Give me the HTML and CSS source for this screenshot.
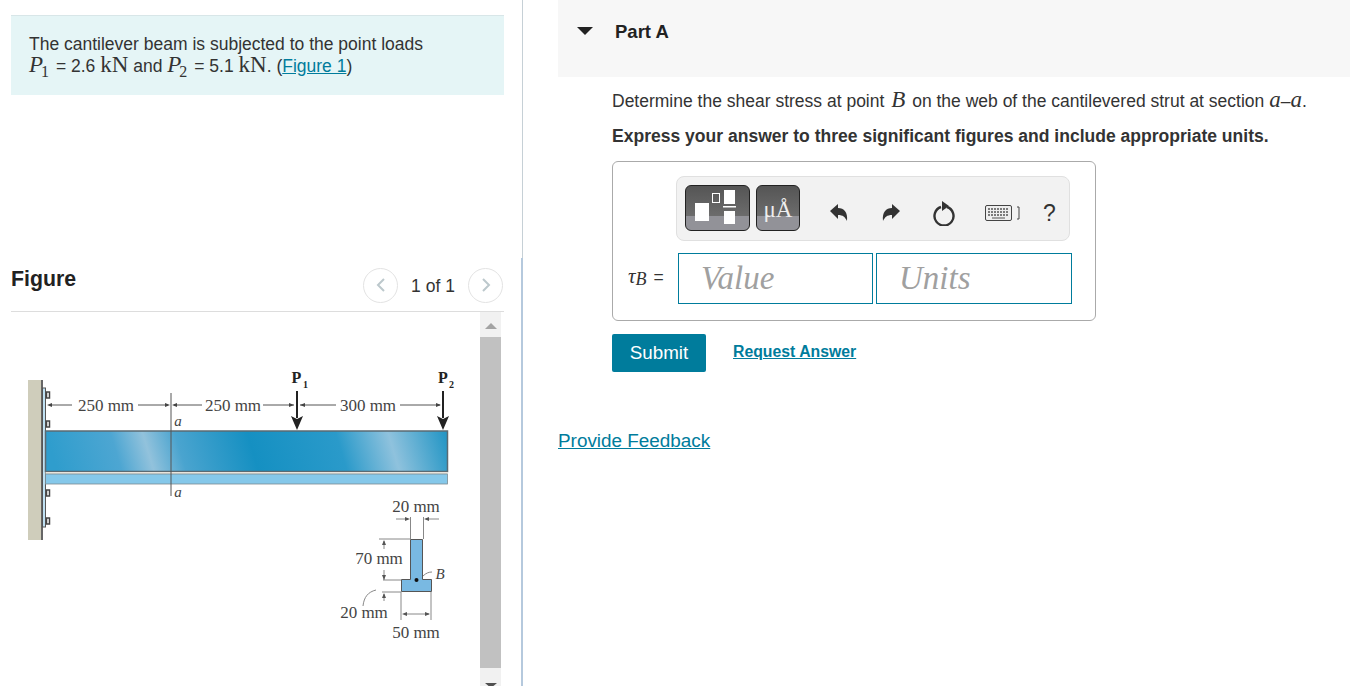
FILE: index.html
```html
<!DOCTYPE html>
<html lang="en">
<head>
<meta charset="utf-8">
<title>Part A</title>
<link rel="stylesheet" href="styles.css">
</head>
<body>
<div class="page">
  <aside class="left">
    <div class="intro">
      <p>The cantilever beam is subjected to the point loads<br>
      <span class="m">P</span><sub class="ms">1</sub> <span class="eq">= 2.6</span> <span class="r">kN</span> and <span class="m">P</span><sub class="ms">2</sub> <span class="eq">= 5.1</span> <span class="r">kN</span>. (<a href="#">Figure 1</a>)</p>
    </div>
    <div class="fig-head">
      <h2>Figure</h2>
      <div class="pager">
        <span class="circle"><svg width="10" height="16" viewBox="0 0 10 16"><path d="M8 2 2 8l6 6" fill="none" stroke="#bcc8cc" stroke-width="2"/></svg></span>
        <span class="count">1 of 1</span>
        <span class="circle"><svg width="10" height="16" viewBox="0 0 10 16"><path d="m2 2 6 6-6 6" fill="none" stroke="#bcc8cc" stroke-width="2"/></svg></span>
      </div>
    </div>
    <div class="fig-view">
      <div class="fig-canvas">
        <svg class="diagram" width="469" height="374" viewBox="0 312 469 374">
          <defs>
            <linearGradient id="beam" x1="0" y1="0" x2="1" y2="-.03">
              <stop offset="0" stop-color="#2f9dcd"/>
              <stop offset=".16" stop-color="#4da6d2"/>
              <stop offset=".24" stop-color="#92c2dc"/>
              <stop offset=".32" stop-color="#4aa4cf"/>
              <stop offset=".5" stop-color="#1590c2"/>
              <stop offset=".72" stop-color="#2a9aca"/>
              <stop offset=".85" stop-color="#8fc2dd"/>
              <stop offset="1" stop-color="#1f94c4"/>
            </linearGradient>
          </defs>
          <rect x="28" y="380" width="13" height="160" fill="#cfcdbb"/>
          <rect x="41" y="380" width="2" height="160" fill="#666"/>
          <rect x="42.500" y="388" width="3" height="139" fill="#bfe0f2" stroke="#555" stroke-width="1"/>
          <g fill="#fff" stroke="#444" stroke-width="1.500">
            <rect x="46.500" y="392" width="3" height="6"/>
            <rect x="46.500" y="421" width="3" height="6"/>
            <rect x="46.500" y="490" width="3" height="6"/>
            <rect x="46.500" y="518" width="3" height="6"/>
          </g>
          <rect x="45.500" y="431" width="402" height="40.500" fill="url(#beam)" stroke="#5b6a72" stroke-width="1.500"/>
          <rect x="45.500" y="472" width="402" height="2" fill="#e8e4dc"/>
          <rect x="45.500" y="474" width="402" height="10" fill="#85c8ea" stroke="#7b8a92" stroke-width=".8"/>
          <g stroke="#555" stroke-width="1" fill="none">
            <path d="M171 393v103"/>
            <path d="M50 405h22M138 405h30M174 405h28M263 405h31M300 405h36M400 405h40"/>
          </g>
          <g fill="#444">
            <path d="m47 405 5-2v4z"/><path d="m170 405-5-2v4z"/><path d="m172 405 5-2v4z"/>
            <path d="m294 405-5-2v4z"/><path d="m300 405 5-2v4z"/><path d="m441 405-5-2v4z"/>
          </g>
          <g stroke="#222" stroke-width="2" fill="#222">
            <path d="M297 391v27M443 391v27"/>
            <path d="m291 416 6 14 6-14-6 3zM437 416l6 14 6-14-6 3z" stroke="none"/>
          </g>
          <g class="dim">
            <text x="106" y="411" text-anchor="middle">250 mm</text>
            <text x="233" y="411" text-anchor="middle">250 mm</text>
            <text x="368" y="411" text-anchor="middle">300 mm</text>
            <text x="416" y="512" text-anchor="middle">20 mm</text>
            <text x="379" y="564" text-anchor="middle">70 mm</text>
            <text x="364" y="618" text-anchor="middle">20 mm</text>
            <text x="416" y="638" text-anchor="middle">50 mm</text>
          </g>
          <g class="loads">
            <text x="291.500" y="383">P</text><text x="303" y="388" class="loadsub">1</text>
            <text x="438" y="383">P</text><text x="449" y="388" class="loadsub">2</text>
          </g>
          <g class="ital">
            <text x="178" y="426" text-anchor="middle">a</text>
            <text x="178" y="497" text-anchor="middle">a</text>
            <text x="440" y="579" text-anchor="middle">B</text>
          </g>
          <path d="M410.500 539.500h12v40h9v12h-30v-12h9z" fill="#79b9e2" stroke="#555" stroke-width="1"/>
          <circle cx="416.500" cy="580" r="2" fill="#111"/>
          <g stroke="#888" stroke-width="1" fill="none">
            <path d="M410.500 517v22M423.500 517v22M379 539h31M383 580h18M382 592h19M401 592v28M431 592v28"/>
            <path d="M396 519h12M426 519h13M384 541v8M384 570v10M384 594v7M405 614h24M423 576c3-3 6-4 9-4M363 606c1-9 5-14 13-16"/>
          </g>
          <g fill="#555">
            <path d="m410 519-5-2v4zM424 519l5-2v4zM384 540l-2 5h4zM384 580l-2-5h4zM384 593l-2 5h4zM402 614l5-2v4zM430 614l-5-2v4z"/>
          </g>
        </svg>
      </div>
      <div class="scrollbar">
        <span class="arrow-up"></span>
        <span class="thumb"></span>
        <span class="arrow-down"></span>
      </div>
    </div>
  </aside>
  <main class="right">
    <header class="part-head">
      <span class="caret"></span>
      <h1>Part A</h1>
    </header>
    <section class="part-body">
      <p class="q">Determine the shear stress at point <span class="m b">B</span> on the web of the cantilevered strut at section <span class="m">a</span>–<span class="m">a</span>.</p>
      <p class="instr">Express your answer to three significant figures and include appropriate units.</p>
      <div class="answer">
        <div class="toolbar">
          <span class="tmpl tmpl-a">
            <svg width="64" height="44" viewBox="0 0 64 44">
              <rect x="9" y="17" width="14" height="18" fill="#fff"/>
              <rect x="26.500" y="7.500" width="7" height="9" fill="none" stroke="#fff"/>
              <rect x="38" y="4" width="11" height="14" fill="#fff"/>
              <rect x="37" y="20" width="13" height="1.500" fill="#fff"/>
              <rect x="38" y="25" width="11" height="13" fill="#fff"/>
            </svg>
          </span>
          <span class="tmpl tmpl-b"><span class="ua">μÅ</span></span>
          <span class="tools">
            <svg class="t1" width="20" height="20" viewBox="0 0 20 20"><path d="M1 8 9 1v4c6 0 10 4 9 13-2-4-4-6-9-6v4z" fill="#333"/></svg>
            <svg class="t2" width="20" height="20" viewBox="0 0 20 20"><path d="M19 8 11 1v4C5 5 1 9 2 18c2-4 4-6 9-6v4z" fill="#333"/></svg>
            <svg class="t3" width="24" height="26" viewBox="0 0 24 26"><path d="M8 7a9.500 9.500 0 1 0 6 0" fill="none" stroke="#333" stroke-width="2.400"/><path d="M9 1l7 5-7 5z" fill="#333"/></svg>
            <svg class="t4" width="37" height="18" viewBox="0 0 37 18"><rect x=".5" y="1.500" width="26" height="15" rx="1.500" fill="#eee" stroke="#444"/><path d="M3 5h21M3 8h21M3 11h21" stroke="#555" stroke-width="1.500" stroke-dasharray="2 1"/><path d="M7 14h13" stroke="#555"/><path d="M32 3h2v12h-2" fill="none" stroke="#444"/></svg>
            <span class="help">?</span>
          </span>
        </div>
        <div class="inputs">
          <span class="lbl"><span class="m">τ</span><span class="m lsub">B</span> =</span>
          <span class="field f1">Value</span>
          <span class="field f2">Units</span>
        </div>
      </div>
      <div class="actions">
        <span class="submit">Submit</span>
        <a class="req" href="#">Request Answer</a>
      </div>
    </section>
    <a class="feedback" href="#">Provide Feedback</a>
  </main>
</div>
</body>
</html>
```
FILE: styles.css
```css
* { box-sizing: border-box; }
html, body { margin: 0; padding: 0; height: 100%; overflow: hidden; background: #fff; }
body { font-family: "Liberation Sans", Arial, sans-serif; color: #333; font-size: 16px; }
p, h1, h2 { margin: 0; }
a { color: #007c9c; }
.page { display: flex; height: 686px; }
.left { width: 523px; flex: none; padding: 15px 0 0 11px; display: flex; flex-direction: column; background: linear-gradient(#b5c9dd, #b5c9dd) right bottom / 2px 428px no-repeat, linear-gradient(#c6d0d6, #c6d0d6) right top / 1px 100% no-repeat; }
.intro { width: 493px; height: 80px; background: #e5f5f6; border-top: 1px solid #d8e6e8; padding: 17px 18px 0; line-height: 22px; font-size: 17.500px; }
.m { font-family: "Liberation Serif", serif; font-style: italic; font-size: 23px; line-height: 0; }
.ms { font-family: "Liberation Serif", serif; font-size: 16px; line-height: 0; margin: 0 2px 0 -2px; }
.r { font-family: "Liberation Serif", serif; font-size: 23px; line-height: 0; }
.fig-head { width: 493px; height: 217px; margin-top: 0; padding-top: 172px; border-bottom: 1px solid #ddd; display: flex; justify-content: space-between; align-items: flex-start; }
.fig-head h2 { font-size: 21.300px; font-weight: bold; color: #222; line-height: 24px; }
.pager { display: flex; align-items: center; height: 36px; margin-right: 1px; }
.circle { width: 35px; height: 35px; border: 1px solid #e3e3e3; border-radius: 50%; display: flex; align-items: center; justify-content: center; }
.count { width: 70px; text-align: center; color: #333; font-size: 17.500px; padding-top: 2px; }
.fig-view { flex: 1; width: 490px; display: flex; min-height: 0; overflow: hidden; }
.fig-canvas { width: 469px; flex: none; margin-left: -11px; }
.diagram { display: block; }
.dim text { font-family: "Liberation Serif", serif; font-size: 17px; fill: #444; }
.loads text { font-family: "Liberation Serif", serif; font-size: 16px; font-weight: bold; fill: #222; }
.loads .loadsub { font-size: 10px; }
.ital text { font-family: "Liberation Serif", serif; font-style: italic; font-size: 15px; fill: #444; }
.scrollbar { width: 21px; margin-left: 11px; background: #f1f1f1; display: flex; flex-direction: column; align-items: center; }
.arrow-up { flex: none; width: 0; height: 0; margin: 11px 0 8px; border: 6px solid transparent; border-top: 0; border-bottom: 6px solid #a3a3a3; }
.thumb { flex: none; width: 21px; height: 331px; background: #c1c1c1; }
.arrow-down { flex: none; width: 0; height: 0; margin-top: 15px; border: 6px solid transparent; border-bottom: 0; border-top: 5px solid #505050; }
.right { flex: 1; padding-left: 35px; min-width: 0; }
.part-head { height: 77px; background: #f7f7f7; position: relative; padding: 20px 0 0 57px; }
.part-head h1 { font-size: 18.500px; font-weight: bold; color: #222; line-height: 24px; }
.caret { position: absolute; left: 19px; top: 27px; width: 0; height: 0; border: 8px solid transparent; border-bottom: 0; border-top: 8px solid #222; }
.part-body { padding-left: 54px; }
.q { margin-top: 12px; line-height: 24px; font-size: 17.500px; }
.q .m { font-size: 23px; }
.q .b { margin: 0 2px; }
.instr { margin-top: 11px; line-height: 24px; font-weight: bold; font-size: 17.550px; }
.answer { margin-top: 13px; width: 484px; height: 160px; border: 1px solid #aaa; border-radius: 6px; padding: 14px 0 0 63px; }
.toolbar { width: 394px; height: 65px; background: #f2f2f2; border: 1px solid #e0e0e0; border-radius: 8px; display: flex; padding: 8px 0 0 8px; gap: 6px; }
.tmpl { display: block; height: 46px; border: 1px solid #222; border-radius: 6px; background: linear-gradient(#555 0, #6c6c6c 68%, #929298 68%, #929298 100%); }
.tmpl-a { width: 65px; }
.tmpl-b { width: 44px; display: flex; align-items: center; justify-content: center; padding-top: 3px; }
.ua { font-family: "Liberation Serif", serif; font-size: 23px; color: #eee; line-height: 1; }
.tools { display: flex; align-items: center; height: 46px; margin: 5px 0 0 23px; position: relative; }
.t1 { margin-right: 32px; }
.t2 { margin-right: 32px; }
.t3 { margin-right: 28px; }
.t4 { margin-right: 21px; }
.help { font-size: 23px; color: #333; }
.inputs { display: flex; align-items: center; margin: 12px 0 0 -48px; height: 51px; }
.lbl { width: 50px; font-size: 17.500px; white-space: nowrap; padding-bottom: 2px; }
.lbl .m { font-size: 21px; }
.lbl .lsub { font-size: 18px; position: relative; top: 2px; margin-right: 2px; }
.field { display: block; width: 195px; height: 51px; border: 1px solid #007c9c; font-family: "Liberation Serif", serif; font-style: italic; font-size: 33px; color: #a0a0a0; line-height: 49px; padding-left: 22px; }
.f2 { margin-left: 3px; width: 196px; }
.actions { margin-top: 13px; display: flex; align-items: center; }
.submit { display: block; width: 94px; height: 38px; background: #007c9c; color: #fff; border-radius: 2px; text-align: center; font-size: 18.800px; line-height: 37px; }
.req { margin-left: 27px; font-weight: bold; font-size: 15.800px; margin-top: -2px; }
.feedback { display: inline-block; margin-top: 57px; font-size: 18.900px; line-height: 24px; }
```
